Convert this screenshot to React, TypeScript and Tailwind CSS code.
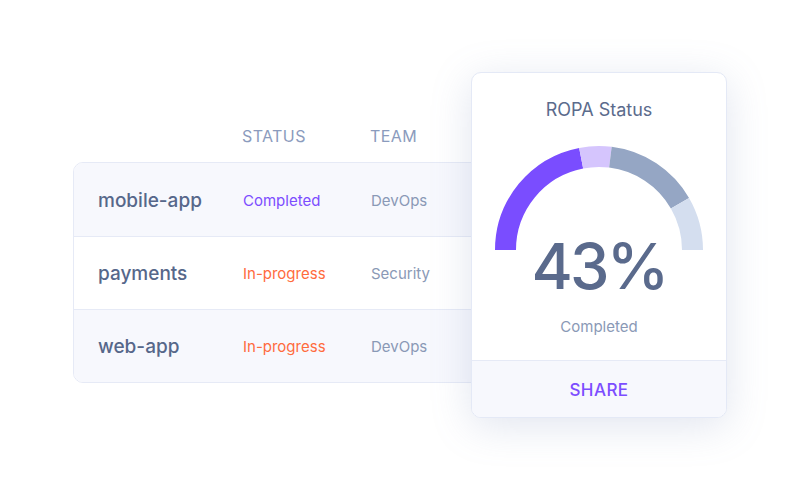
import React from 'react';

const rows = [
    { name: 'mobile-app', status: 'Completed', team: 'DevOps', bg: 'bg-[#f7f8fd]' },
    { name: 'payments', status: 'In-progress', team: 'Security', bg: 'bg-white' },
    { name: 'web-app', status: 'In-progress', team: 'DevOps', bg: 'bg-[#f7f8fd]' },
];

// gauge geometry
const CX = 105;
const CY = 105;
const R = 93.5;

const pt = (deg: number) => {
    const a = (deg * Math.PI) / 180;
    return `${(CX + R * Math.cos(a)).toFixed(2)} ${(CY - R * Math.sin(a)).toFixed(2)}`;
};

const arc = (from: number, to: number) => `M ${pt(from)} A ${R} ${R} 0 0 1 ${pt(to)}`;

const segments = [
    { from: 180, to: 101, color: '#7a4dff' },
    { from: 101, to: 83, color: '#d5c5fd' },
    { from: 83, to: 30, color: '#95a6c4' },
    { from: 30, to: 0, color: '#d4deef' },
];

const Gauge = () => (
    <svg width="210" height="105" viewBox="0 0 210 105">
        {segments.map((s, i) => (
            <path key={i} d={arc(s.from, s.to)} fill="none" stroke={s.color} strokeWidth="21" />
        ))}
    </svg>
);

export default function App() {
    return (
        <div className="relative w-[800px] h-[490px] bg-white overflow-hidden" style={{ fontFamily: 'Inter, "Noto Sans", sans-serif' }}>
            {/* Table */}
            <div className="pl-[73px] pt-[124px]">
                <div className="flex h-[24px] items-center text-[16px] text-[#8b9bbd] uppercase tracking-wide">
                    <div className="w-[169px]" />
                    <div className="w-[128px]">Status</div>
                    <div>Team</div>
                </div>
                <div className="mt-[14px] w-[460px] border border-[#e6eaf6] rounded-[10px] overflow-hidden">
                    {rows.map((r, i) => (
                        <div key={r.name} className={`flex items-center h-[73px] pt-[3px] ${r.bg} ${i > 0 ? 'border-t border-[#e6eaf6]' : ''}`}>
                            <div className="w-[169px] pl-[24px] text-[19px] text-[#56678a] font-medium">{r.name}</div>
                            <div className={`w-[128px] text-[15px] ${r.status === 'Completed' ? 'text-[#7c4dff]' : 'text-[#ff6b3d]'}`}>{r.status}</div>
                            <div className="text-[15px] text-[#8a99b6]">{r.team}</div>
                        </div>
                    ))}
                </div>
            </div>

            {/* ROPA card */}
            <div className="absolute left-[471px] top-[72px] w-[256px] h-[346px] bg-white border border-[#e4e9f6] rounded-[10px] shadow-[0_8px_40px_rgba(120,135,180,0.22)] flex flex-col overflow-hidden">
                <div className="flex-1 flex flex-col items-center pt-[25px]">
                    <div className="text-[18px] leading-[24px] text-[#5b6b8c]">ROPA Status</div>
                    <div className="mt-[23px]">
                        <Gauge />
                    </div>
                    <div className="-mt-[16px] text-[63px] leading-[64px] text-[#5a6a8c] tracking-[-0.045em] font-[450]">43%</div>
                    <div className="mt-[18px] text-[15px] text-[#8a99b6]">Completed</div>
                </div>
                <div className="h-[57px] pt-[3px] border-t border-[#e6eaf6] bg-[#f7f8fd] flex items-center justify-center text-[17px] text-[#7c4dff] tracking-wide font-medium">
                    SHARE
                </div>
            </div>
        </div>
    );
}
